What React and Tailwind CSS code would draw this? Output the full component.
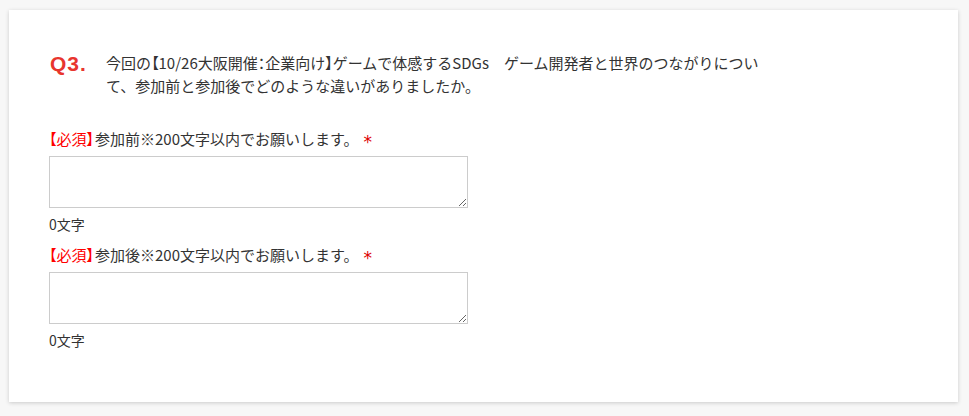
import React from "react";

const Field = ({ label }) => (
  <div>
    <p className="text-[15px] leading-[23px] text-[#333]">
      <span className="mr-[1px] text-[#f00] [font-feature-settings:'palt']">【必須】</span>
      {label}
      <span className="ml-[5px] inline-block translate-y-[3px] font-['DejaVu_Sans',sans-serif] text-[17px] leading-none text-[#d00]">
        *
      </span>
    </p>
    <textarea className="mt-[6px] block h-[52px] w-[419px] border border-[#ccc] bg-white" />
    <p className="mt-[5px] text-[14px] leading-[23px] text-[#333]">0文字</p>
  </div>
);

const Narrow = ({ children }) => (
  <span className="[font-feature-settings:'palt']">{children}</span>
);

export default function App() {
  return (
    <div className="min-h-[416px] bg-[#f7f7f7] pl-[9px] pr-[11px] pt-[10px] font-['Noto_Sans_CJK_JP','Noto_Sans',sans-serif]">
      <div className="min-h-[392px] bg-white pb-[50px] pl-[40px] pt-[41px] shadow-[0_1px_4px_rgba(0,0,0,0.18)]">
        <div className="flex items-start">
          <div className="w-[57px] pl-[1px] pt-[1px] font-['Liberation_Sans',Arial,sans-serif] text-[21px] font-bold leading-[23px] tracking-[1px] text-[#e8352e]">
            Q3.
          </div>
          <p className="w-[672px] text-[15px] leading-[23px] text-[#333]">
            今回の<Narrow>【</Narrow>10/26大阪開催<Narrow>：</Narrow>企業向け<Narrow>】</Narrow>ゲームで体感するSDGs　ゲーム開発者と世界のつながりについて、参加前と参加後でどのような違いがありましたか。
          </p>
        </div>
        <div className="mt-[30px] flex flex-col gap-[7px]">
          <Field label="参加前※200文字以内でお願いします。" />
          <Field label="参加後※200文字以内でお願いします。" />
        </div>
      </div>
    </div>
  );
}
